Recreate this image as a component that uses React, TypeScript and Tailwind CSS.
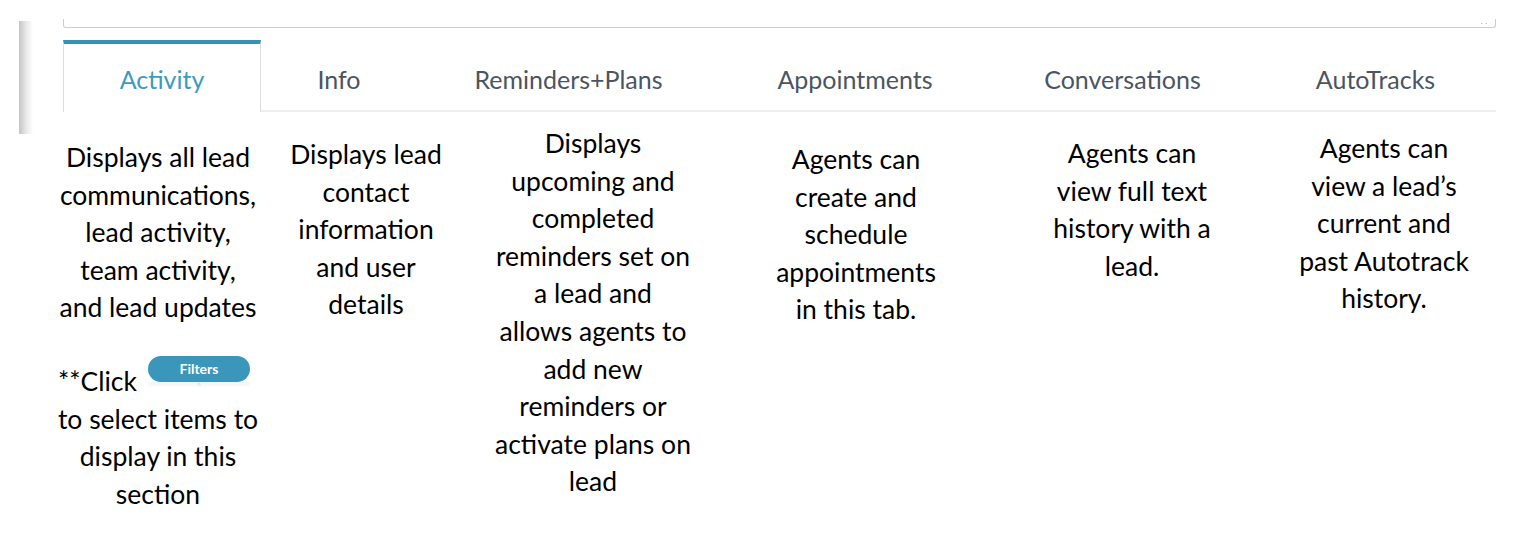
import React from 'react';

// ─── Datos ────────────────────────────────────────────────────────────────────

const TABS = [
    { label: 'Activity', w: 'w-[198px]', active: true },
    { label: 'Info', w: 'w-[156px]' },
    { label: 'Reminders+Plans', w: 'w-[303px]' },
    { label: 'Appointments', w: 'w-[270px]' },
    { label: 'Conversations', w: 'w-[265px]' },
    { label: 'AutoTracks', w: 'w-[241px]' },
];

const BODY = "font-['Lato','Liberation_Sans',sans-serif] text-[26.5px] leading-[37.6px] text-black text-center";

// ─── Componente ───────────────────────────────────────────────────────────────

export default function App() {
    return (
        <div className="w-[1530px] h-[545px] bg-white overflow-hidden relative">

            <div className="flex">
                {/* barra gris izquierda */}
                <div className="ml-[19px] mt-[21px] w-[14px] h-[113px] bg-gradient-to-r from-[#c4c4c4] via-[#e8e8e8] to-white" />

                <div className="ml-[30px] w-[1433px]">
                    {/* borde inferior del textarea */}
                    <div className="mt-[19px] h-[9px] border-x border-b border-[#c8ced4] rounded-b-[3px] relative">
                        <span className="absolute right-[6px] bottom-[2px] text-[7px] leading-none text-[#9aa3ab] tracking-[1px]">&#8228;&#8228;</span>
                    </div>

                    {/* tabs */}
                    <div className="flex mt-[12px] font-['Lato','Liberation_Sans',sans-serif]">
                        {TABS.map(t => (
                            <div key={t.label}
                                className={t.active
                                    ? `${t.w} h-[72px] border-t-[4px] border-t-[#3592b6] border-x border-x-[#dadee2] flex items-center justify-center pt-[4px] text-[25px] text-[#3d9bc1]`
                                    : `${t.w} h-[72px] border-b-2 border-b-[#eceef0] flex items-center justify-center pt-[10px] text-[25px] text-[#4b5561]`}>
                                {t.label}
                            </div>
                        ))}
                    </div>
                </div>
            </div>

            {/* descripciones */}
            <div className="flex items-start pl-[40px] -mt-[16px]">
                <div className="w-[236px] pt-[21px]">
                    <p className={BODY}>Displays all lead<br />communications,<br />lead activity,<br />team activity,<br />and lead updates</p>
                    <div className="mt-[36px] flex justify-start items-start gap-[11px] pl-[18px]">
                        <span className={BODY}>**Click</span>
                        <div className="flex flex-col items-center mt-[-7px]">
                            <span className="w-[102px] h-[26px] rounded-full bg-[#3a96bb] text-white font-['Lato',sans-serif] font-bold text-[14px] flex items-center justify-center pb-[1px]">Filters</span>
                            <span className="w-[102px] h-[6px] bg-gradient-to-b from-[#f1f3f4] to-white flex justify-center">
                                <span className="text-[7px] leading-none text-[#d0d4d8]">^</span>
                            </span>
                        </div>
                    </div>
                    <p className={BODY}>to select items to<br />display in this<br />section</p>
                </div>
                <div className="w-[180px] pt-[18px]">
                    <p className={BODY}>Displays lead<br />contact<br />information<br />and user<br />details</p>
                </div>
                <div className="w-[274px] pt-[7px]">
                    <p className={BODY}>Displays<br />upcoming and<br />completed<br />reminders set on<br />a lead and<br />allows agents to<br />add new<br />reminders or<br />activate plans on<br />lead</p>
                </div>
                <div className="w-[252px] pt-[23px]">
                    <p className={BODY}>Agents can<br />create and<br />schedule<br />appointments<br />in this tab.</p>
                </div>
                <div className="w-[300px] pt-[17px]">
                    <p className={BODY}>Agents can<br />view full text<br />history with a<br />lead.</p>
                </div>
                <div className="w-[204px] pt-[12px]">
                    <p className={BODY}>Agents can<br />view a lead’s<br />current and<br />past Autotrack<br />history.</p>
                </div>
            </div>
        </div>
    );
}
